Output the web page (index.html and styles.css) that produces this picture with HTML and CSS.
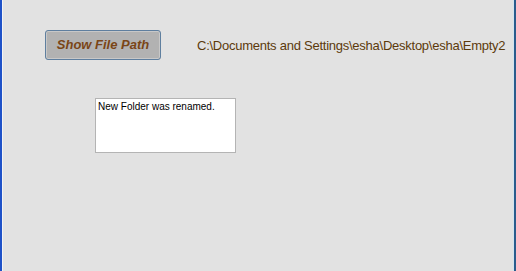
FILE: index.html
```html
<!DOCTYPE html>
<html lang="en">
<head>
  <meta charset="UTF-8">
  <title>File Path</title>
  <link rel="stylesheet" href="styles.css">
</head>
<body>
  <div class="window">
    <div class="top-row">
      <button class="path-button">Show File Path</button>
      <span class="path-label">C:\Documents and Settings\esha\Desktop\esha\Empty2</span>
    </div>
    <div class="message-box">New Folder was renamed.</div>
  </div>
</body>
</html>
```

FILE: styles.css
```css
* {
  box-sizing: border-box;
  margin: 0;
  padding: 0;
}

body {
  width: 516px;
  height: 271px;
  overflow: hidden;
  font-family: "Liberation Sans", Arial, sans-serif;
}

.window {
  height: 100%;
  background: #e2e2e2;
  border-left: 2px solid #1f52c8;
  border-right: 2px solid #2a5c8c;
  box-shadow:
    inset 1px 0 0 #f4f4f4,
    inset -1px 0 0 #d2e4f0;
  padding-top: 30px;
}

.top-row {
  display: flex;
  align-items: center;
  padding-left: 43px;
}

.path-button {
  flex-shrink: 0;
  width: 116px;
  height: 30px;
  background: #b2b2b2;
  border: 1px solid #5f7f9f;
  border-radius: 3px;
  box-shadow: inset 0 0 0 1px #c8c8c8;
  font-family: "Liberation Sans", Arial, sans-serif;
  font-size: 13px;
  font-weight: bold;
  font-style: italic;
  color: #7a4516;
  padding-bottom: 1px;
}

.path-label {
  margin-left: 36px;
  font-size: 13px;
  letter-spacing: -0.25px;
  color: #5c3a0c;
  white-space: nowrap;
  margin-top: 1px;
}

.message-box {
  margin-top: 38px;
  margin-left: 93px;
  width: 141px;
  height: 55px;
  background: #fff;
  border: 1px solid #b4b4b4;
  padding: 2px 0 0 2px;
  font-size: 10px;
  color: #000;
}
```
